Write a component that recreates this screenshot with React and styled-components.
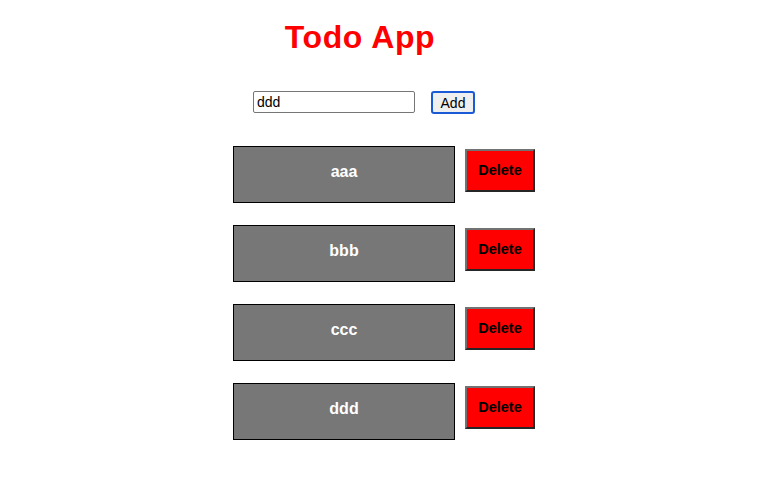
import React, { useState } from "react";
import styled, { createGlobalStyle } from "styled-components";

const GlobalStyle = createGlobalStyle`
  body {
    margin: 0;
    background: #fff;
    font-family: "Liberation Sans", Arial, sans-serif;
  }
`;

const Page = styled.div`
  width: 720px;
  display: flex;
  flex-direction: column;
  align-items: center;
`;

const Title = styled.h1`
  margin: 19px 0 0;
  font-size: 32px;
  font-weight: 700;
  letter-spacing: 0.6px;
  color: #ff0000;
  line-height: normal;
`;

const Form = styled.div`
  display: flex;
  align-items: flex-start;
  gap: 16px;
  margin-top: 35px;
  padding-left: 8px;
`;

const Input = styled.input`
  box-sizing: border-box;
  width: 162px;
  height: 22px;
  padding: 1px 3px;
  border: 1px solid #767676;
  border-radius: 2px;
  font-family: "Liberation Sans", Arial, sans-serif;
  font-size: 14px;
  color: #000;
  outline: none;
`;

const AddButton = styled.button`
  box-sizing: border-box;
  width: 44px;
  height: 23px;
  padding: 0;
  border: 2px solid #1a5ad6;
  border-radius: 3px;
  background: #efefef;
  font-family: "Liberation Sans", Arial, sans-serif;
  font-size: 14px;
  color: #000;
`;

const List = styled.ul`
  list-style: none;
  margin: 32px 0 0;
  padding: 0 0 0 48px;
  display: flex;
  flex-direction: column;
  gap: 22px;
`;

const Row = styled.li`
  display: flex;
  align-items: flex-start;
  gap: 10px;
`;

const Item = styled.div`
  box-sizing: border-box;
  width: 222px;
  height: 57px;
  padding-bottom: 5px;
  border: 1px solid #000;
  background: #777777;
  color: #fff;
  font-size: 16px;
  font-weight: 700;
  display: flex;
  align-items: center;
  justify-content: center;
`;

const DeleteButton = styled.button`
  box-sizing: border-box;
  margin-top: 3px;
  width: 70px;
  height: 43px;
  padding: 0 0 2px;
  background: #ff0000;
  border: 2px solid;
  border-color: #727272 #262626 #262626 #727272;
  font-family: "Liberation Sans", Arial, sans-serif;
  font-size: 14.5px;
  font-weight: 700;
  color: #000;
`;

export default function App() {
  const [todos, setTodos] = useState(["aaa", "bbb", "ccc", "ddd"]);
  const [text, setText] = useState("ddd");

  return (
    <>
      <GlobalStyle />
      <Page>
        <Title>Todo App</Title>
        <Form>
          <Input value={text} onChange={(e) => setText(e.target.value)} />
          <AddButton onClick={() => text && setTodos([...todos, text])}>
            Add
          </AddButton>
        </Form>
        <List>
          {todos.map((todo, i) => (
            <Row key={i}>
              <Item>{todo}</Item>
              <DeleteButton
                onClick={() => setTodos(todos.filter((_, j) => j !== i))}
              >
                Delete
              </DeleteButton>
            </Row>
          ))}
        </List>
      </Page>
    </>
  );
}
